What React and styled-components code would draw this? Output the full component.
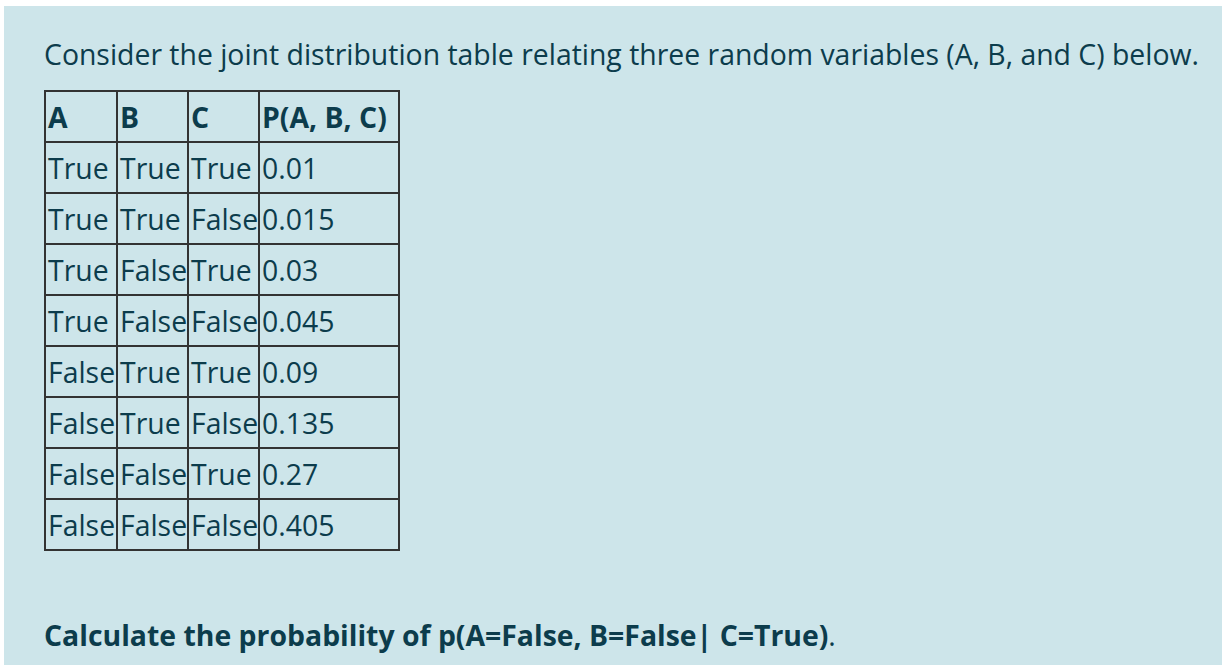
import React from "react";
import styled, { createGlobalStyle } from "styled-components";

const GlobalStyle = createGlobalStyle`
  html, body {
    margin: 0;
    padding: 0;
    background: #ffffff;
  }
  body {
    font-family: "Open Sans", "Noto Sans", sans-serif;
  }
`;

const Panel = styled.div`
  margin: 6px 0 0 4px;
  height: 659px;
  box-sizing: border-box;
  padding: 29px 0 0 40px;
  background: #cde5ea;
  color: #0c3c4c;
  font-size: 28.4px;
  overflow: hidden;
`;

const Intro = styled.p`
  margin: 0 0 17px;
  line-height: 38px;
`;

const Table = styled.table`
  border: 1px solid #333;
  border-spacing: 0;
  table-layout: fixed;
  width: 354px;
  font-size: 28.4px;
`;

const Col = styled.col`
  width: ${({ $w }) => $w}px;
`;

const Cell = styled.td`
  border: 1px solid #333;
  height: 49px;
  padding: 0 2px;
  font-weight: ${({ $head }) => ($head ? 700 : 400)};
  white-space: nowrap;
  overflow: visible;
`;

const Question = styled.p`
  margin: 65px 0 0;
  font-weight: 700;
  line-height: 38px;
`;

const Dot = styled.span`
  font-weight: 400;
`;

const widths = [72, 71, 71, 140];

const rows = [
  ["True", "True", "True", "0.01"],
  ["True", "True", "False", "0.015"],
  ["True", "False", "True", "0.03"],
  ["True", "False", "False", "0.045"],
  ["False", "True", "True", "0.09"],
  ["False", "True", "False", "0.135"],
  ["False", "False", "True", "0.27"],
  ["False", "False", "False", "0.405"],
];

export default function App() {
  return (
    <>
      <GlobalStyle />
      <Panel>
        <Intro>
          Consider the joint distribution table relating three random variables (A, B, and C) below.
        </Intro>
        <Table>
          <colgroup>
            {widths.map((w, i) => (
              <Col key={i} $w={w} />
            ))}
          </colgroup>
          <tbody>
            <tr>
              <Cell $head>A</Cell>
              <Cell $head>B</Cell>
              <Cell $head>C</Cell>
              <Cell $head>P(A, B, C)</Cell>
            </tr>
            {rows.map((r, i) => (
              <tr key={i}>
                {r.map((v, j) => (
                  <Cell key={j}>{v}</Cell>
                ))}
              </tr>
            ))}
          </tbody>
        </Table>
        <Question>
          Calculate the probability of p(A=False, B=False| C=True)<Dot>.</Dot>
        </Question>
      </Panel>
    </>
  );
}
